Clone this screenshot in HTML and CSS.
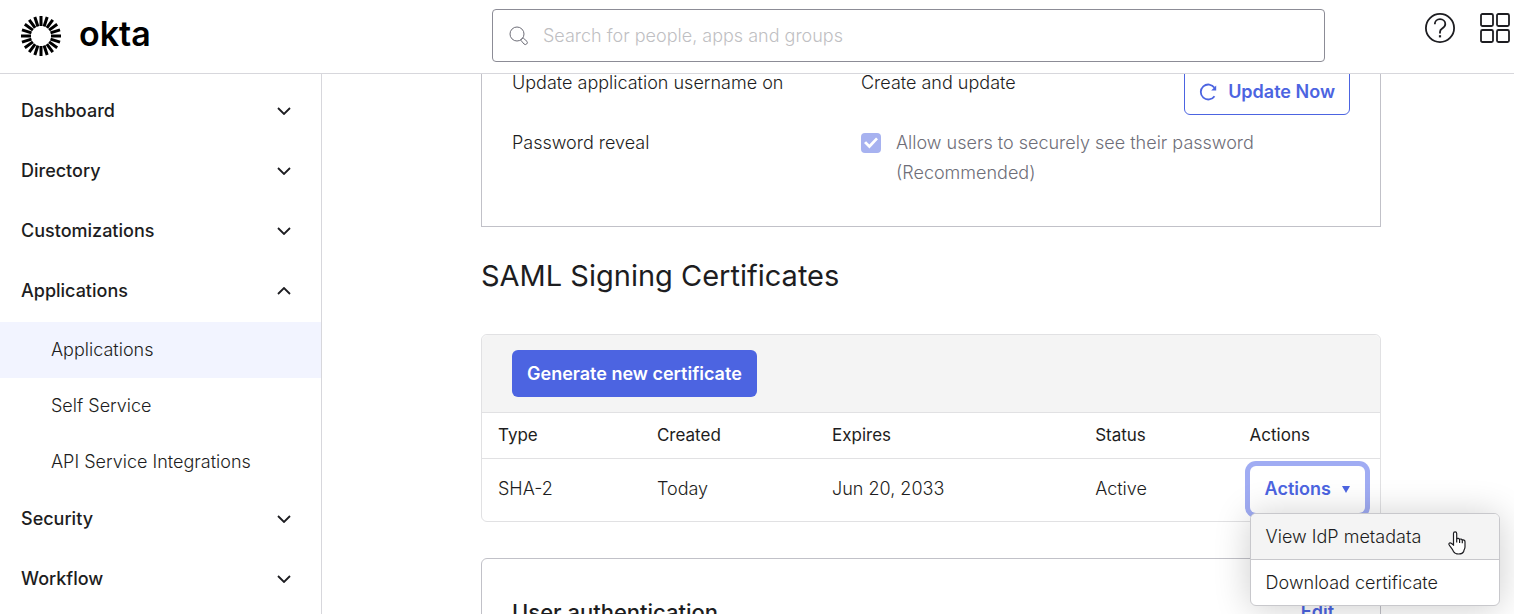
FILE: index.html
```html
<!DOCTYPE html>
<html lang="en">
<head>
    <meta charset="UTF-8">
    <meta name="viewport" content="width=device-width, initial-scale=1.0">
    <title>Okta Admin - Applications</title>
    <link rel="stylesheet" href="styles.css">
</head>
<body>
    <header class="header">
        <a class="logo" href="#">
            <svg class="logo-mark" viewBox="0 0 40 40" aria-hidden="true">
                <defs>
                    <path id="ray" d="M20 0v10M20 30v10"></path>
                    <g id="rays">
                        <use href="#ray"></use>
                        <use href="#ray" transform="rotate(18 20 20)"></use>
                        <use href="#ray" transform="rotate(36 20 20)"></use>
                        <use href="#ray" transform="rotate(54 20 20)"></use>
                        <use href="#ray" transform="rotate(72 20 20)"></use>
                    </g>
                </defs>
                <use href="#rays"></use>
                <use href="#rays" transform="rotate(90 20 20)"></use>
            </svg>
            <span class="logo-text">okta</span>
        </a>

        <form class="search">
            <svg class="search-icon" viewBox="0 0 20 20" aria-hidden="true">
                <circle cx="8" cy="8" r="7"></circle>
                <path d="M11.8 14.2l3.2 3.8a2 2 0 0 0 3-2.6l-3.7-3.3"></path>
                <path d="M11.8 14.2c.3-1.2 1.3-2 2.5-2.1"></path>
            </svg>
            <input class="search-input" type="text" aria-label="Search" placeholder="Search for people, apps and groups">
        </form>

        <div class="header-icons">
            <button class="icon-btn" type="button" aria-label="Help">
                <svg viewBox="0 0 30 30">
                    <circle cx="15" cy="15" r="14.1"></circle>
                    <path d="M9.8 11.2c0-3 2.2-5 5.2-5s5.3 2 5.3 4.8c0 2.4-1.5 3.5-3.1 4.6-1.5 1-2.2 1.7-2.2 3.3v1.5"></path>
                    <path d="M15 22.2v2.2" stroke-width="2.2"></path>
                </svg>
            </button>
            <button class="icon-btn" type="button" aria-label="Apps">
                <svg viewBox="0 0 30 30">
                    <rect x="1" y="1" width="12" height="12" rx="1.5"></rect>
                    <rect x="17" y="1" width="12" height="12" rx="1.5"></rect>
                    <rect x="1" y="17" width="12" height="12" rx="1.5"></rect>
                    <rect x="17" y="17" width="12" height="12" rx="1.5"></rect>
                </svg>
            </button>
        </div>
    </header>

    <div class="layout">
        <nav class="sidebar">
            <button class="nav-item" type="button">Dashboard
                <svg class="chevron" viewBox="0 0 14 8"><path d="M1 1l6 6 6-6"></path></svg>
            </button>
            <button class="nav-item" type="button">Directory
                <svg class="chevron" viewBox="0 0 14 8"><path d="M1 1l6 6 6-6"></path></svg>
            </button>
            <button class="nav-item" type="button">Customizations
                <svg class="chevron" viewBox="0 0 14 8"><path d="M1 1l6 6 6-6"></path></svg>
            </button>
            <button class="nav-item" type="button" aria-expanded="true">Applications
                <svg class="chevron" viewBox="0 0 14 8"><path d="M1 7l6-6 6 6"></path></svg>
            </button>
            <a class="nav-sub active" href="#">Applications</a>
            <a class="nav-sub" href="#">Self Service</a>
            <a class="nav-sub" href="#">API Service Integrations</a>
            <button class="nav-item" type="button">Security
                <svg class="chevron" viewBox="0 0 14 8"><path d="M1 1l6 6 6-6"></path></svg>
            </button>
            <button class="nav-item" type="button">Workflow
                <svg class="chevron" viewBox="0 0 14 8"><path d="M1 1l6 6 6-6"></path></svg>
            </button>
        </nav>

        <main class="main">
            <div class="content">
                <section class="panel settings">
                    <span>Update application username on</span>
                    <span>Create and update</span>
                    <button class="btn btn-outline" type="button">
                        <svg class="refresh-icon" viewBox="0 0 18 18" aria-hidden="true">
                            <path d="M15.5 13.2A7.500 7.500 0 1 1 15.5 4.800"></path>
                            <path class="refresh-head" d="M17.200 2.500v5h-5z"></path>
                        </svg>
                        Update Now
                    </button>
                    <span>Password reveal</span>
                    <label class="check">
                        <input class="check-input" type="checkbox" checked disabled>
                        <span>Allow users to securely see their password (Recommended)</span>
                    </label>
                </section>

                <h2 class="title">SAML Signing Certificates</h2>

                <section class="certs">
                    <div class="toolbar">
                        <button class="btn btn-primary" type="button">Generate new certificate</button>
                    </div>
                    <table class="table">
                        <thead>
                            <tr>
                                <th class="col-type">Type</th>
                                <th class="col-created">Created</th>
                                <th class="col-expires">Expires</th>
                                <th class="col-status">Status</th>
                                <th>Actions</th>
                            </tr>
                        </thead>
                        <tbody>
                            <tr>
                                <td>SHA-2</td>
                                <td>Today</td>
                                <td>Jun 20, 2033</td>
                                <td>Active</td>
                                <td>
                                    <div class="dropdown">
                                        <button class="btn btn-actions" type="button" aria-expanded="true">Actions
                                            <svg class="caret" viewBox="0 0 8 7"><path d="M0 0h8l-4 7z"></path></svg>
                                        </button>
                                        <div class="menu">
                                            <a class="menu-item hovered" href="#">View IdP metadata</a>
                                            <a class="menu-item" href="#">Download certificate</a>
                                            <svg class="pointer" viewBox="0 0 18 24" aria-hidden="true">
                                                <path d="M5.5 14V2.5a1.6 1.6 0 0 1 3.2 0V8c.5-1 2.6-.8 2.9.5.7-.9 2.4-.5 2.7.7.9-.5 2.7-.2 2.7 1.6V16c0 2-1.3 3-1.3 4.5-.8 1.8-2.5 2.5-5 2.5s-4.2-.6-5.2-2.5C4.6 18 2 15.6 1 13.5c-.4-1.3 1-2.2 2.2-1.3z"></path>
                                                <path d="M8.7 7.5v4M11.6 8.5V12M14.3 9.3v3"></path>
                                            </svg>
                                        </div>
                                    </div>
                                </td>
                            </tr>
                        </tbody>
                    </table>
                </section>

                <section class="panel auth">
                    <h3 class="auth-title">User authentication</h3>
                    <a class="edit-link" href="#">Edit</a>
                </section>
            </div>
        </main>
    </div>
</body>
</html>
```
FILE: styles.css
```css
* {
    margin: 0;
    padding: 0;
    box-sizing: border-box;
}

body {
    height: 100vh;
    display: flex;
    flex-direction: column;
    overflow: hidden;
    font-family: Inter, "Liberation Sans", sans-serif;
    font-size: 18px;
    font-weight: 300;
    line-height: 30px;
    color: #1d1d21;
    background-color: #fff;
}

button,
input {
    font: inherit;
    color: inherit;
    background: none;
    border: none;
}

a {
    color: inherit;
    text-decoration: none;
}

svg {
    display: block;
    fill: none;
    stroke: currentColor;
}

/* header */
.header {
    display: grid;
    grid-template-columns: 492px 1fr 189px;
    align-items: start;
    height: 74px;
    flex-shrink: 0;
    border-bottom: 1px solid #d7d7dc;
}

.logo {
    display: flex;
    align-items: center;
    gap: 18px;
    height: 72px;
    padding-left: 21px;
    color: #000;
}

.logo-mark {
    width: 40px;
    height: 40px;
    stroke-width: 3;
}

.logo-text {
    font-size: 34px;
    font-weight: 600;
    line-height: 40px;
    padding-bottom: 4px;
}

.search {
    display: flex;
    align-items: center;
    gap: 14px;
    height: 53px;
    margin-top: 9px;
    padding: 0 16px;
    border: 1px solid #8c8c96;
    border-radius: 4px;
}

.search-icon {
    width: 20px;
    height: 20px;
    flex-shrink: 0;
    color: #6e6e78;
}

.search-input {
    flex: 1;
    outline: none;
}

.search-input::placeholder {
    color: #bfbfc3;
    opacity: 1;
}

.header-icons {
    display: flex;
    justify-content: flex-end;
    gap: 25px;
    padding: 13px 4px 0 0;
}

.icon-btn {
    width: 30px;
    height: 30px;
    cursor: pointer;
}

.icon-btn svg {
    stroke-width: 1.8;
}

/* sidebar */
.layout {
    display: flex;
    flex: 1;
    min-height: 0;
}

.sidebar {
    width: 322px;
    flex-shrink: 0;
    padding-top: 8px;
    border-right: 1px solid #d7d7dc;
    overflow: hidden;
}

.nav-item {
    display: flex;
    justify-content: space-between;
    align-items: center;
    width: 100%;
    height: 60px;
    padding: 0 30px 2px 21px;
    font-weight: 500;
    cursor: pointer;
}

.chevron {
    width: 14px;
    height: 8px;
    stroke-width: 1.8;
}

.nav-sub {
    display: block;
    padding: 13px 0 13px 51px;
}

.nav-sub.active {
    background-color: #f2f4ff;
}

/* main */
.main {
    flex: 1;
    min-width: 0;
    overflow: hidden;
    padding: 0 40px 0 159px;
}

/* page is scrolled part of the way down */
.content {
    max-width: 900px;
    margin-top: -36px;
}

.panel {
    border: 1px solid #c1c1c8;
}

.settings {
    display: grid;
    grid-template-columns: 349px 1fr auto;
    row-gap: 13px;
    align-items: start;
    padding: 29px 30px 38px;
}

.btn {
    display: flex;
    align-items: center;
    height: 47px;
    padding: 0 15px;
    border-radius: 6px;
    font-weight: 600;
    white-space: nowrap;
    cursor: pointer;
}

.btn-outline {
    gap: 11px;
    padding: 0 14px;
    border: 1px solid #4c64e1;
    color: #4c64e1;
}

.refresh-icon {
    width: 18px;
    height: 18px;
    stroke-width: 1.8;
}

.refresh-head {
    fill: currentColor;
    stroke: none;
}

.check {
    display: flex;
    gap: 15px;
    grid-column: span 2;
    max-width: 420px;
    color: #6e6e78;
}

.check-input {
    appearance: none;
    width: 20px;
    height: 20px;
    flex-shrink: 0;
    margin-top: 5px;
    border-radius: 4px;
    background-color: #a7b2f0;
    display: grid;
    place-items: center;
}

.check-input::before {
    content: "";
    width: 14px;
    height: 12px;
    background-color: #fff;
    clip-path: polygon(0 50%, 15% 36%, 38% 63%, 86% 4%, 100% 18%, 39% 96%);
}

.title {
    margin: 28px 0 37px;
    font-size: 29px;
    font-weight: 400;
    line-height: 42px;
}

.certs {
    border: 1px solid #e1e1e3;
    border-radius: 6px;
}

.toolbar {
    padding: 15px 30px;
    background-color: #f4f4f4;
    border-bottom: 1px solid #e1e1e3;
    border-radius: 6px 6px 0 0;
}

.btn-primary {
    background-color: #4c64e1;
    color: #fff;
}

.table {
    width: 100%;
    table-layout: fixed;
    border-collapse: collapse;
}

.table th {
    height: 45px;
    padding: 0 16px;
    border-bottom: 1px solid #e1e1e3;
    font-size: 17px;
    font-weight: 400;
    text-align: left;
}

.table td {
    padding: 7px 16px 8px;
}

.col-type {
    width: 17.7%;
}

.col-created {
    width: 19.5%;
}

.col-expires {
    width: 29.3%;
}

.col-status {
    width: 17.2%;
}

/* actions dropdown */
.dropdown {
    position: relative;
    width: max-content;
}

.btn-actions {
    gap: 11px;
    color: #4c64e1;
    box-shadow: 0 0 0 5px #a0acf3;
}

.caret {
    width: 8px;
    height: 7px;
    fill: currentColor;
    stroke: none;
}

.menu {
    position: absolute;
    top: 100%;
    left: 0;
    width: 250px;
    background-color: #fff;
    border: 1px solid #c8c8cc;
    border-radius: 6px;
    box-shadow: 0 2px 36px rgba(0, 0, 0, 0.2);
    overflow: hidden;
    z-index: 2;
}

.menu-item {
    display: block;
    padding: 8px 15px 7px;
}

.menu-item + .menu-item {
    border-top: 1px solid #c8c8cc;
}

.menu-item.hovered {
    background-color: #f4f4f4;
}

.pointer {
    position: absolute;
    top: 17px;
    left: 197px;
    width: 18px;
    height: 24px;
    fill: #fff;
    stroke: #1d1d21;
    stroke-width: 1.2;
}

/* user authentication */
.auth {
    display: flex;
    justify-content: space-between;
    align-items: center;
    margin-top: 36px;
    padding: 38px 46px 30px 30px;
    border-radius: 6px;
}

.auth-title {
    font-size: 22px;
    font-weight: 500;
}

.edit-link {
    font-weight: 600;
    color: #4c64e1;
}
```
